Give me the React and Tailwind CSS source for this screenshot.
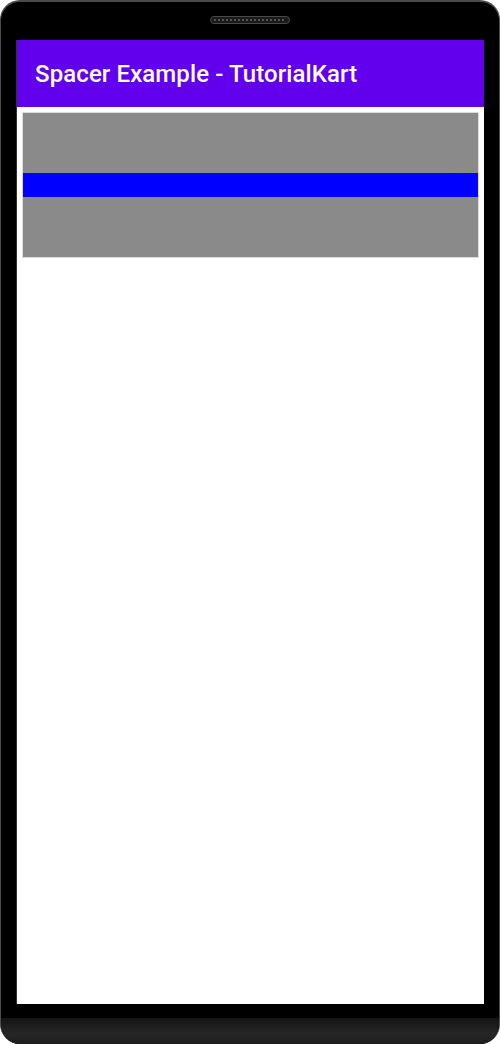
import React from "react";

const Speaker = () => (
  <div className="w-[80px] h-[8px] rounded-full bg-[#1a1a1a] border border-[#4a4a4a] flex items-center justify-center px-[3px]">
    <div className="w-full h-[2px] bg-[repeating-linear-gradient(90deg,#555_0_2px,transparent_2px_4px)]" />
  </div>
);

export default function App() {
  return (
    <div className="w-[500px] h-[1044px] bg-white">
      <div className="w-full h-full flex flex-col bg-black rounded-[20px] border-t-[2px] border-x-[1px] border-[#4b4b4b] overflow-hidden">
        {/* top bezel */}
        <div className="h-[38px] flex justify-center pt-[14px]">
          <Speaker />
        </div>

        {/* screen */}
        <div className="flex-1 mx-[15px] bg-white flex flex-col border-l border-[#333]">
          <div className="h-[67px] bg-[#6200ee] flex items-center pl-[18px]">
            <span
              className="text-white text-[24px] font-medium leading-none tracking-[0.1px]"
              style={{ fontFamily: "Roboto, 'Noto Sans', sans-serif" }}
            >
              Spacer Example - TutorialKart
            </span>
          </div>
          <div className="px-[5px] pt-[5px]">
            <div className="border border-[#dcdcdc]">
              <div className="h-[60px] bg-[#8a8a8a]" />
              <div className="h-[24px] bg-[#0000ff]" />
              <div className="h-[60px] bg-[#8a8a8a]" />
            </div>
          </div>
        </div>

        {/* bottom bezel */}
        <div className="h-[40px] flex flex-col">
          <div className="h-[14px] bg-black" />
          <div className="flex-1 bg-[linear-gradient(180deg,#141414,#262626_60%,#1e1e1e)]" />
        </div>
      </div>
    </div>
  );
}
